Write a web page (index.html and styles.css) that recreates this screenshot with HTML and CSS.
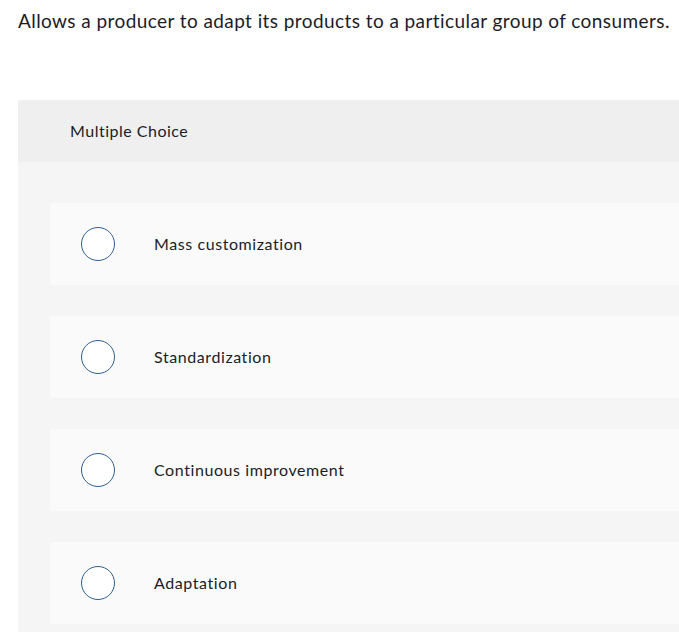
FILE: index.html
```html
<!DOCTYPE html>
<html lang="en">
<head>
<meta charset="utf-8">
<title>Multiple Choice</title>
<link rel="stylesheet" href="styles.css">
</head>
<body>
<p class="question">Allows a producer to adapt its products to a particular group of consumers.</p>
<section class="panel">
  <header class="panel-head">Multiple Choice</header>
  <div class="panel-body">
    <label class="option"><span class="radio"></span><span class="option-text">Mass customization</span></label>
    <label class="option"><span class="radio"></span><span class="option-text">Standardization</span></label>
    <label class="option"><span class="radio"></span><span class="option-text">Continuous improvement</span></label>
    <label class="option"><span class="radio"></span><span class="option-text">Adaptation</span></label>
  </div>
</section>
</body>
</html>
```
FILE: styles.css
```css
html, body {
  margin: 0;
  padding: 0;
  background: #ffffff;
  overflow: hidden;
}
body {
  font-family: Lato, "Open Sans", "Liberation Sans", sans-serif;
  color: #1c1c28;
}
.question {
  margin: 9px 0 0 18px;
  font-size: 19px;
  line-height: 24px;
  letter-spacing: 0.42px;
  white-space: nowrap;
}
.panel {
  margin: 67px 0 0 18px;
  width: 661px;
  border-radius: 3px 0 0 0;
  overflow: hidden;
  background: #f5f5f5;
}
.panel-head {
  height: 62px;
  display: flex;
  align-items: center;
  padding-left: 52px;
  padding-bottom: 1px;
  box-sizing: border-box;
  background: #efefef;
  font-size: 16px;
  letter-spacing: 0.5px;
}
.panel-body {
  display: flex;
  flex-direction: column;
  gap: 31px;
  padding: 41px 0 20px 32px;
}
.option {
  height: 82px;
  display: flex;
  align-items: center;
  background: #fafafa;
  border-radius: 3px 0 0 3px;
  padding-left: 31px;
  font-size: 16px;
}
.radio {
  box-sizing: border-box;
  width: 34px;
  height: 34px;
  border-radius: 50%;
  border: 1.5px solid #2f5f8f;
  background: #ffffff;
  flex: none;
}
.option-text {
  margin-left: 39px;
  margin-bottom: 1px;
  letter-spacing: 0.58px;
}
```
